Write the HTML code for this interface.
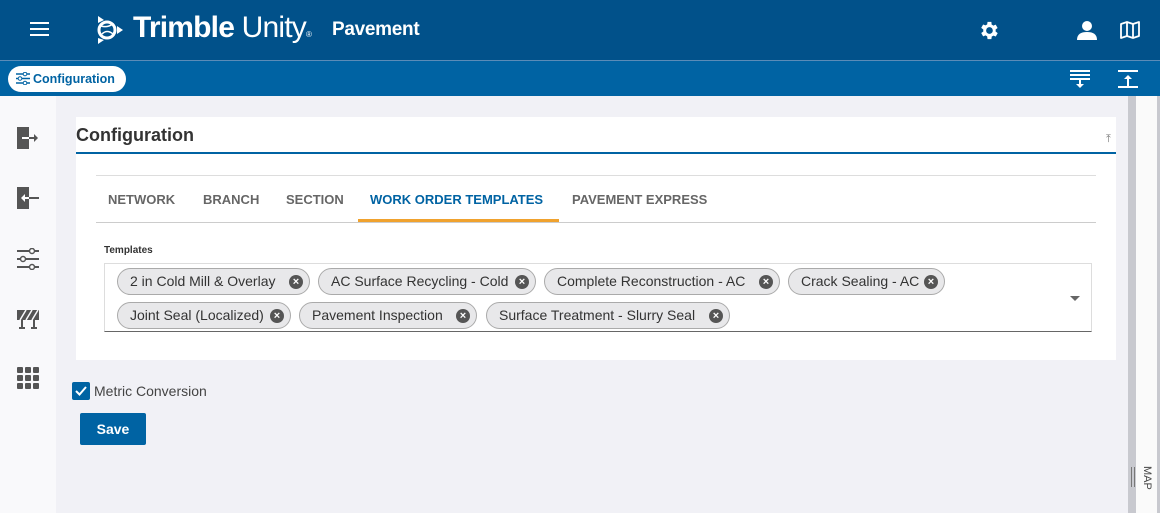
<!DOCTYPE html>
<html><head><style>
*{box-sizing:border-box;margin:0;padding:0}
body{width:1160px;height:513px;overflow:hidden;font-family:"Liberation Sans",sans-serif;background:#f1f1f6;position:relative}
.a{position:absolute}
.hdr{left:0;top:0;width:1160px;height:60px;background:#01518a}
.sub{left:0;top:60px;width:1160px;height:36px;background:#0063a3;border-top:1px solid #5a8cb8}
.side{left:0;top:96px;width:56px;height:417px;background:#f9f9fb}
.card{left:76px;top:117px;width:1040px;height:243px;background:#fff}
.chip{position:absolute;height:27px;border:1px solid #aaa;border-radius:14px;background:#e8e8ea;font-size:14px;color:#333;line-height:25px;padding-left:12px;white-space:nowrap}
.chip i{position:absolute;right:6px;top:6px;width:14px;height:14px;border-radius:50%;background:#555;color:#fff;font-style:normal;font-size:11px;line-height:14px;text-align:center;font-weight:bold}
.tab{position:absolute;top:192px;font-size:13px;font-weight:bold;color:#666;letter-spacing:0}
</style></head><body>
<div class="a hdr"></div>
<div class="a" style="left:30px;top:22px;width:19px;height:2px;background:#fff;box-shadow:0 6px #fff,0 12px #fff"></div>
<svg class="a" style="left:96px;top:14px" width="30" height="32" viewBox="0 0 30 32"><polygon points="2,2 8,6 2,9" fill="#fff"/><circle cx="11" cy="16" r="8" fill="none" stroke="#fff" stroke-width="3"/><path d="M5 12q6 2 12-2M6 20q5-5 11 0" stroke="#fff" stroke-width="1.5" fill="none"/><polygon points="21,12 27,16 21,20" fill="#fff"/><polygon points="2,24 8,26 2,30" fill="#fff"/></svg>
<div class="a" style="left:133px;top:11px;color:#fff;font-size:30px;letter-spacing:-.8px"><span style="font-weight:600">Trimble</span> <span style="font-weight:300">Unity</span><span style="font-size:8px">®</span></div>
<div class="a" style="left:332px;top:19px;color:#fff;font-size:19px;font-weight:bold;letter-spacing:-.3px">Pavement</div>
<svg class="a" style="left:977px;top:19px" width="23" height="23" viewBox="0 0 24 24"><path fill="#fff" d="M19.4 13a7.5 7.5 0 000-2l2.1-1.6-2-3.5-2.5 1a7 7 0 00-1.7-1L15 3h-4l-.4 2.7a7 7 0 00-1.7 1l-2.5-1-2 3.5L6.6 11a7.5 7.5 0 000 2l-2.2 1.6 2 3.5 2.5-1a7 7 0 001.7 1L11 21h4l.4-2.7a7 7 0 001.7-1l2.5 1 2-3.5zM13 15.5a3.5 3.5 0 110-7 3.5 3.5 0 010 7z"/></svg>
<svg class="a" style="left:1076px;top:20px" width="22" height="20" viewBox="0 0 22 20"><circle cx="11" cy="6" r="5" fill="#fff"/><path d="M1 20c0-6 4-8 10-8s10 2 10 8z" fill="#fff"/></svg>
<svg class="a" style="left:1120px;top:20px" width="20" height="20" viewBox="0 0 20 20"><path d="M1 4l6-2 6 2 6-2v14l-6 2-6-2-6 2zM7 2v14M13 4v14" fill="none" stroke="#fff" stroke-width="1.8" stroke-linejoin="round"/></svg>
<div class="a sub"></div>
<div class="a" style="left:8px;top:66px;width:118px;height:26px;background:#fff;border-radius:13px;color:#0063a3;font-size:12.5px;font-weight:bold;line-height:26px;padding-left:25px">Configuration</div>
<svg class="a" style="left:16px;top:72px" width="14" height="13" viewBox="0 0 14 13"><path d="M0 2h14M0 6.5h14M0 11h14" stroke="#0063a3" stroke-width="1.5"/><circle cx="9" cy="2" r="1.8" fill="#fff" stroke="#0063a3"/><circle cx="4" cy="6.5" r="1.8" fill="#fff" stroke="#0063a3"/><circle cx="9" cy="11" r="1.8" fill="#fff" stroke="#0063a3"/></svg>
<svg class="a" style="left:1070px;top:69px" width="20" height="20" viewBox="0 0 20 20"><path d="M0 2h20M0 6h20M0 10h20M10 10v8" stroke="#fff" stroke-width="2"/><path d="M6 15l4 4 4-4z" fill="#fff"/></svg>
<svg class="a" style="left:1118px;top:69px" width="20" height="20" viewBox="0 0 20 20"><path d="M0 2h20M0 18h20M10 17V8" stroke="#fff" stroke-width="2"/><path d="M6 10l4-4 4 4z" fill="#fff"/></svg>
<div class="a side"></div>
<svg class="a" style="left:16px;top:126px" width="24" height="24" viewBox="0 0 24 24"><rect x="1" y="1" width="12" height="22" fill="#555"/><path d="M6 12h14" stroke="#fff" stroke-width="2"/><path d="M13 12h7" stroke="#555" stroke-width="2"/><path d="M18 8l4 4-4 4z" fill="#555"/></svg>
<svg class="a" style="left:16px;top:186px" width="24" height="24" viewBox="0 0 24 24"><rect x="1" y="1" width="12" height="22" fill="#555"/><path d="M7 12h16" stroke="#555" stroke-width="2"/><path d="M7 12h6" stroke="#fff" stroke-width="2"/><path d="M9 8l-4 4 4 4z" fill="#fff"/></svg>
<svg class="a" style="left:17px;top:248px" width="22" height="22" viewBox="0 0 22 22"><path d="M0 3h22M0 11h22M0 19h22" stroke="#555" stroke-width="2"/><circle cx="15" cy="3" r="2.5" fill="#fff" stroke="#555" stroke-width="1.5"/><circle cx="6" cy="11" r="2.5" fill="#fff" stroke="#555" stroke-width="1.5"/><circle cx="15" cy="19" r="2.5" fill="#fff" stroke="#555" stroke-width="1.5"/></svg>
<svg class="a" style="left:17px;top:308px" width="22" height="22" viewBox="0 0 22 22"><rect x="0" y="2" width="22" height="10" fill="#555"/><path d="M3 12L9 2M9 12L15 2M15 12L21 2" stroke="#f9f9fb" stroke-width="1.5"/><path d="M5 12v8M17 12v8M2 20h6M14 20h6" stroke="#555" stroke-width="2"/></svg>
<svg class="a" style="left:17px;top:367px" width="22" height="22" viewBox="0 0 22 22" fill="#555"><rect x="0" y="0" width="6" height="6" rx="1"/><rect x="8" y="0" width="6" height="6" rx="1"/><rect x="16" y="0" width="6" height="6" rx="1"/><rect x="0" y="8" width="6" height="6" rx="1"/><rect x="8" y="8" width="6" height="6" rx="1"/><rect x="16" y="8" width="6" height="6" rx="1"/><rect x="0" y="16" width="6" height="6" rx="1"/><rect x="8" y="16" width="6" height="6" rx="1"/><rect x="16" y="16" width="6" height="6" rx="1"/></svg>
<div class="a card"></div>
<div class="a" style="left:76px;top:125px;font-size:18px;font-weight:bold;color:#333">Configuration</div>
<div class="a" style="left:76px;top:152px;width:1040px;height:2px;background:#0063a3"></div>
<div class="a" style="left:1106px;top:133px;font-size:11px;color:#777">⤒</div>
<div class="a" style="left:96px;top:175px;width:1000px;height:1px;background:#ddd"></div>
<div class="a" style="left:96px;top:222px;width:1000px;height:1px;background:#ccc"></div>
<div class="tab" style="left:108px">NETWORK</div>
<div class="tab" style="left:203px">BRANCH</div>
<div class="tab" style="left:286px">SECTION</div>
<div class="tab" style="left:370px;color:#0063a3">WORK ORDER TEMPLATES</div>
<div class="a" style="left:358px;top:219px;width:201px;height:3px;background:#f0a22e"></div>
<div class="tab" style="left:572px">PAVEMENT EXPRESS</div>
<div class="a" style="left:104px;top:245px;font-size:10px;font-weight:bold;color:#333">Templates</div>
<div class="a" style="left:104px;top:263px;width:988px;height:69px;border:1px solid #ddd;border-bottom:1px solid #666"></div>
<div class="chip" style="left:117px;top:268px;width:193px">2 in Cold Mill &amp; Overlay<i>×</i></div>
<div class="chip" style="left:318px;top:268px;width:218px">AC Surface Recycling - Cold<i>×</i></div>
<div class="chip" style="left:544px;top:268px;width:236px">Complete Reconstruction - AC<i>×</i></div>
<div class="chip" style="left:788px;top:268px;width:157px">Crack Sealing - AC<i>×</i></div>
<div class="chip" style="left:117px;top:302px;width:174px">Joint Seal (Localized)<i>×</i></div>
<div class="chip" style="left:299px;top:302px;width:178px">Pavement Inspection<i>×</i></div>
<div class="chip" style="left:486px;top:302px;width:244px">Surface Treatment - Slurry Seal<i>×</i></div>
<div class="a" style="left:1070px;top:296px;border-left:5px solid transparent;border-right:5px solid transparent;border-top:5px solid #666"></div>
<div class="a" style="left:72px;top:382px;width:18px;height:18px;background:#0063a3;border-radius:2px"></div>
<svg class="a" style="left:74px;top:384px" width="14" height="14" viewBox="0 0 14 14"><path d="M2 7l3.5 3.5L12 3" stroke="#fff" stroke-width="2" fill="none"/></svg>
<div class="a" style="left:94px;top:383px;font-size:14px;color:#444">Metric Conversion</div>
<div class="a" style="left:80px;top:413px;width:66px;height:32px;background:#0063a3;border-radius:2px;color:#fff;font-weight:bold;font-size:14px;text-align:center;line-height:32px">Save</div>
<div class="a" style="left:1128px;top:96px;width:8px;height:417px;background:#c8c9cf"></div>
<div class="a" style="left:1131px;top:467px;width:1px;height:20px;background:#777;box-shadow:3px 0 #777"></div>
<div class="a" style="left:1136px;top:96px;width:24px;height:417px;background:#fafafa;border-right:3px solid #c8c9cf"></div>
<div class="a" style="left:1141px;top:466px;font-size:11px;color:#444;writing-mode:vertical-rl">MAP</div>
</body></html>
